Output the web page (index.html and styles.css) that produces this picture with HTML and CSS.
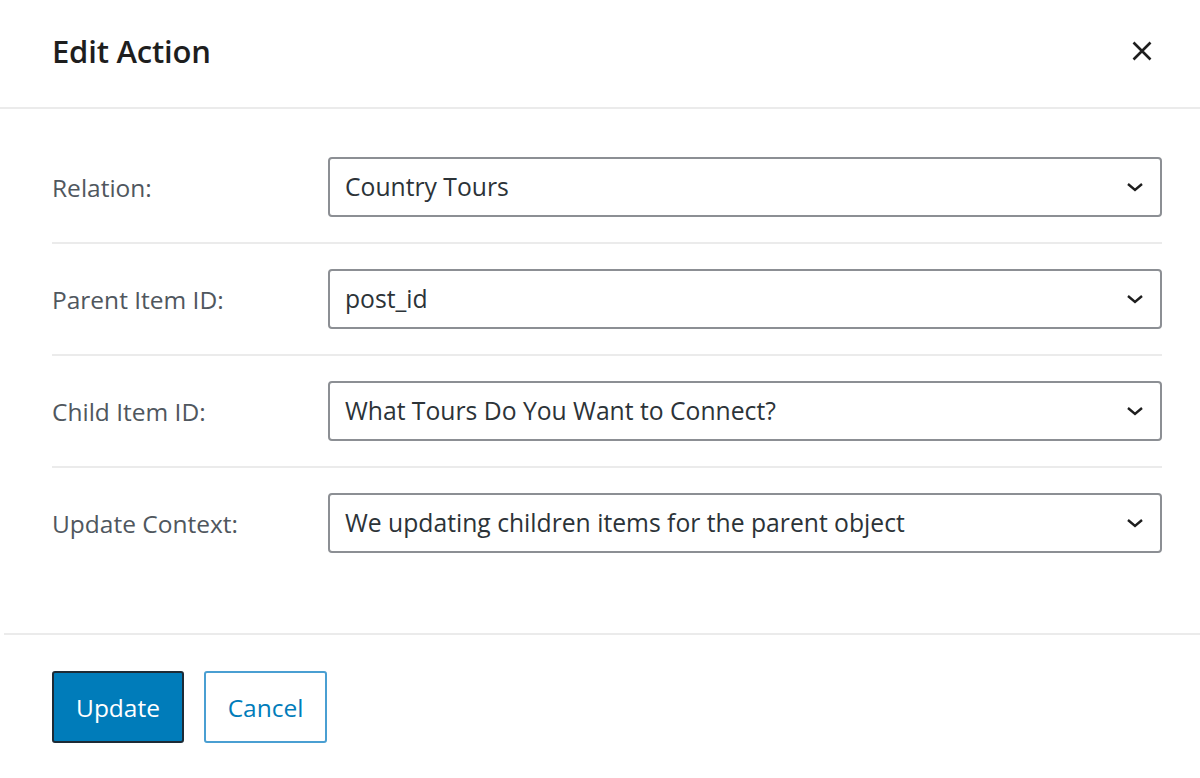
FILE: index.html
```html
<!DOCTYPE html>
<html>
<head>
<meta charset="utf-8">
<link rel="stylesheet" href="styles.css">
</head>
<body>
<div class="modal">
  <div class="header">
    <h1 class="title">Edit Action</h1>
    <button class="close" aria-label="Close">
      <svg width="24" height="24" viewBox="0 0 24 24"><path d="M3.5 3.5 L20.5 20.5 M20.5 3.5 L3.5 20.5" stroke="#1e1e1e" stroke-width="2.6" fill="none"/></svg>
    </button>
  </div>
  <div class="content">
    <div class="row">
      <label class="label">Relation:</label>
      <div class="select"><span class="value">Country Tours</span><svg class="chev" width="20" height="12" viewBox="0 0 20 12"><path d="M3 3 L10 9 L17 3" stroke="#1e1e1e" stroke-width="2.4" fill="none"/></svg></div>
    </div>
    <div class="row">
      <label class="label">Parent Item ID:</label>
      <div class="select"><span class="value">post_id</span><svg class="chev" width="20" height="12" viewBox="0 0 20 12"><path d="M3 3 L10 9 L17 3" stroke="#1e1e1e" stroke-width="2.4" fill="none"/></svg></div>
    </div>
    <div class="row">
      <label class="label">Child Item ID:</label>
      <div class="select"><span class="value">What Tours Do You Want to Connect?</span><svg class="chev" width="20" height="12" viewBox="0 0 20 12"><path d="M3 3 L10 9 L17 3" stroke="#1e1e1e" stroke-width="2.4" fill="none"/></svg></div>
    </div>
    <div class="row">
      <label class="label">Update Context:</label>
      <div class="select"><span class="value">We updating children items for the parent object</span><svg class="chev" width="20" height="12" viewBox="0 0 20 12"><path d="M3 3 L10 9 L17 3" stroke="#1e1e1e" stroke-width="2.4" fill="none"/></svg></div>
    </div>
  </div>
  <div class="footer">
    <button class="btn primary">Update</button>
    <button class="btn secondary">Cancel</button>
  </div>
</div>
</body>
</html>
```
FILE: styles.css
```css
* { box-sizing: border-box; }
html, body { margin: 0; padding: 0; background: #fff; }
body { font-family: "Open Sans", "Noto Sans", sans-serif; width: 1200px; height: 778px; overflow: hidden; }
.modal { width: 1200px; }
.header {
  height: 109px;
  border-bottom: 2px solid #ebebeb;
  display: flex;
  align-items: center;
  justify-content: space-between;
  padding: 0 46px 6px 52px;
}
.title { margin: 0; font-size: 31px; font-weight: 600; color: #1e1e1e; letter-spacing: -0.2px; }
.close { border: 0; background: none; padding: 0; width: 24px; height: 24px; display: flex; cursor: pointer; }
.content { padding: 23px 38px 55px 52px; }
.row {
  display: flex;
  align-items: center;
  padding: 25px 0;
  border-bottom: 2px solid #ebebeb;
}
.row:last-child { border-bottom: 0; }
.label { width: 276px; flex: none; font-size: 24.5px; color: #50575e; }
.select {
  flex: 1;
  height: 60px;
  border: 2px solid #8c8f94;
  border-radius: 4px;
  display: flex;
  align-items: center;
  justify-content: space-between;
  padding: 0 15px 0 15px;
  font-size: 24.7px;
  color: #2c3338;
}
.value { padding-bottom: 1px; }
.chev { flex: none; }
.footer {
  margin-left: 4px;
  border-top: 2px solid #ebebeb;
  padding: 36px 0 0 48px;
  display: flex;
  gap: 20px;
}
.btn {
  height: 72px;
  font-family: inherit;
  font-size: 24.5px;
  border-radius: 3px;
  padding: 0;
  cursor: pointer;
}
.primary { background: #007cba; color: #fff; border: 2px solid #1d2b36; width: 132px; }
.secondary { background: #fff; color: #007cba; border: 2px solid #4a9fd2; width: 123px; }
```
